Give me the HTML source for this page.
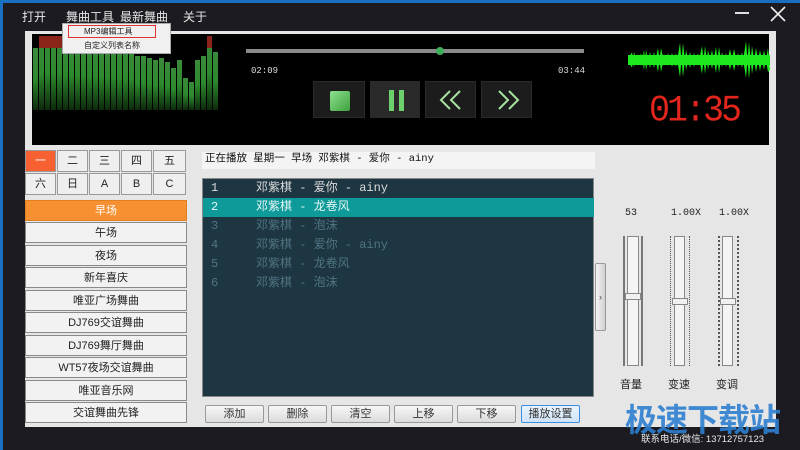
<!DOCTYPE html>
<html><head><meta charset="utf-8"><style>
*{margin:0;padding:0;box-sizing:border-box}
body{width:800px;height:450px;background:#1b1b21;position:relative;overflow:hidden;font-family:"Liberation Sans","Noto Sans CJK SC",sans-serif;font-size:11px}
.a{position:absolute}
.menu{color:#e8e8e8;font-size:12px;top:8px}
.grid div{position:absolute;width:31px;height:22px;background:#efefef;border:1px solid #999;text-align:center;line-height:21px;color:#222;font-size:11px}
.cat{position:absolute;left:25px;width:162px;height:21px;background:#f2f2f2;border:1px solid #8a8a8a;text-align:center;line-height:20px;color:#222;font-size:11px}
.row{position:absolute;left:0;width:391px;height:19px;line-height:19px;font-size:12px;font-family:"Liberation Mono","Noto Sans CJK SC",monospace}
.row span{position:absolute}
.btn{position:absolute;top:405px;width:59px;height:18px;background:linear-gradient(#f6f6f6,#dcdcdc);border:1px solid #999;border-radius:2px;text-align:center;line-height:16px;color:#333;font-size:11px}
.pb{position:absolute;top:81px;height:37px;background:#1c1c1c;border:1px solid #2a2a2a}
</style></head><body>
<div class="a" style="left:0;top:0;width:800px;height:3px;background:#1b6fc0"></div>
<div class="a" style="left:0;top:0;width:3px;height:450px;background:#1b6fc0"></div>
<div class="a menu" style="left:22px">打开</div>
<div class="a menu" style="left:66px">舞曲工具</div>
<div class="a menu" style="left:120px">最新舞曲</div>
<div class="a menu" style="left:183px">关于</div>
<div class="a" style="left:735px;top:12px;width:14px;height:2px;background:#ddd"></div>
<svg class="a" style="left:770px;top:6px" width="16" height="16"><path d="M1 1L15 15M15 1L1 15" stroke="#eee" stroke-width="1.6"/></svg>
<div class="a" style="left:25px;top:31px;width:751px;height:396px;background:#e6e6e6"></div>
<div class="a" style="left:32px;top:34px;width:737px;height:111px;background:#000"></div>
<svg class="a" style="left:32px;top:34px" width="190" height="80">
<defs><linearGradient id="g" x1="0" y1="0" x2="0" y2="1"><stop offset="0" stop-color="#3a8a3a"/><stop offset=".5" stop-color="#2e8a2e"/><stop offset="1" stop-color="#0c2a0c"/></linearGradient></defs>
<g fill="url(#g)">
<rect x="1" y="14" width="5" height="62"/><rect x="7" y="2" width="5" height="74"/><rect x="13" y="2" width="5" height="74"/><rect x="19" y="2" width="5" height="74"/><rect x="25" y="2" width="5" height="74"/><rect x="31" y="4" width="5" height="72"/><rect x="37" y="6" width="5" height="70"/><rect x="43" y="6" width="5" height="70"/><rect x="49" y="6" width="5" height="70"/><rect x="55" y="8" width="5" height="68"/><rect x="61" y="8" width="5" height="68"/><rect x="67" y="10" width="5" height="66"/><rect x="73" y="10" width="5" height="66"/><rect x="79" y="10" width="5" height="66"/><rect x="85" y="12" width="5" height="64"/><rect x="91" y="14" width="5" height="62"/><rect x="97" y="14" width="5" height="62"/><rect x="103" y="22" width="5" height="54"/><rect x="109" y="22" width="5" height="54"/><rect x="115" y="24" width="5" height="52"/><rect x="121" y="26" width="5" height="50"/><rect x="127" y="24" width="5" height="52"/><rect x="133" y="28" width="5" height="48"/><rect x="139" y="34" width="5" height="42"/><rect x="145" y="26" width="5" height="50"/><rect x="151" y="44" width="5" height="32"/><rect x="157" y="48" width="5" height="28"/><rect x="163" y="26" width="5" height="50"/><rect x="169" y="22" width="5" height="54"/><rect x="175" y="2" width="5" height="74"/><rect x="181" y="18" width="5" height="58"/>
</g>
<g fill="#8a2418"><rect x="7" y="2" width="23" height="12"/><rect x="175" y="2" width="5" height="12"/></g>
</svg>
<div class="a" style="left:62px;top:23px;width:109px;height:31px;background:#f0f0f0;border:1px solid #aaa"></div>
<div class="a" style="left:68px;top:25px;width:88px;height:13px;border:1.5px solid #d33"></div>
<div class="a" style="left:84px;top:26px;font-size:8px;color:#222">MP3编辑工具</div>
<div class="a" style="left:84px;top:40px;font-size:8px;color:#222">自定义列表名称</div>
<div class="a" style="left:246px;top:49px;width:338px;height:4px;background:#8a8a8a"></div>
<div class="a" style="left:436px;top:47px;width:8px;height:8px;border-radius:50%;background:#3fae5a"></div>
<div class="a" style="left:251px;top:66px;color:#ddd;font-size:9px;font-family:'Liberation Mono',monospace">02:09</div>
<div class="a" style="left:558px;top:66px;color:#ddd;font-size:9px;font-family:'Liberation Mono',monospace">03:44</div>
<div class="pb" style="left:313px;width:52px"><div class="a" style="left:16px;top:9px;width:20px;height:20px;border-radius:2px;background:linear-gradient(135deg,#8fe28f,#3da03d)"></div></div>
<div class="pb" style="left:370px;width:50px;background:#2a2a2a"><div class="a" style="left:18px;top:8px;width:5px;height:21px;background:#6cd06c"></div><div class="a" style="left:28px;top:8px;width:5px;height:21px;background:#6cd06c"></div></div>
<div class="pb" style="left:425px;width:51px"><svg class="a" style="left:12px;top:8px" width="26" height="20"><path d="M12 1L3 10L12 19M22 1L13 10L22 19" stroke="#a8e0a0" stroke-width="2" fill="none"/></svg></div>
<div class="pb" style="left:481px;width:51px"><svg class="a" style="left:13px;top:8px" width="26" height="20"><path d="M4 1L13 10L4 19M14 1L23 10L14 19" stroke="#a8e0a0" stroke-width="2" fill="none"/></svg></div>
<svg class="a" style="left:628px;top:40px" width="142" height="40"><g fill="#1ee81e"><rect x="0" y="15" width="142" height="10"/><path d="M0 20 L4 12 L6 27 L10 14 L13 26 L16 10 L18 30 L22 12 L26 28 L30 8 L33 32 L37 14 L40 26 L44 13 L48 27 L52 3 L55 37 L58 10 L62 28 L66 13 L70 26 L74 6 L77 34 L80 10 L84 29 L88 7 L91 33 L94 12 L98 27 L102 9 L106 31 L110 13 L114 28 L118 1 L121 39 L124 6 L128 32 L132 10 L136 30 L140 8 L142 30 L140 32 L136 10 L132 31 L128 8 L124 34 L121 2 L118 38 L114 12 L110 27 L106 9 L102 30 L98 13 L94 27 L91 7 L88 33 L84 10 L80 30 L77 6 L74 34 L70 13 L66 27 L62 12 L58 30 L55 3 L52 37 L48 13 L44 27 L40 13 L37 26 L33 8 L30 32 L26 12 L22 28 L18 10 L16 30 L13 13 L10 26 L6 12 L4 28Z"/></g></svg>
<div class="a" style="left:649px;top:92px;color:#e2261e;font-size:35px;font-family:'Liberation Mono',monospace;letter-spacing:-3px;line-height:38px;transform:scaleY(1.05)">01:35</div>
<div class="grid">
<div style="left:25px;top:150px;background:#f76030;color:#fff">一</div><div style="left:57px;top:150px">二</div><div style="left:89px;top:150px">三</div><div style="left:121px;top:150px">四</div><div style="left:153px;top:150px;width:33px">五</div>
<div style="left:25px;top:173px">六</div><div style="left:57px;top:173px">日</div><div style="left:89px;top:173px">A</div><div style="left:121px;top:173px">B</div><div style="left:153px;top:173px;width:33px">C</div>
</div>
<div class="cat" style="top:200px;background:#f79030;color:#fff;border-color:#e08020">早场</div>
<div class="cat" style="top:222px">午场</div>
<div class="cat" style="top:245px">夜场</div>
<div class="cat" style="top:267px">新年喜庆</div>
<div class="cat" style="top:290px">唯亚广场舞曲</div>
<div class="cat" style="top:312px">DJ769交谊舞曲</div>
<div class="cat" style="top:335px">DJ769舞厅舞曲</div>
<div class="cat" style="top:357px">WT57夜场交谊舞曲</div>
<div class="cat" style="top:380px">唯亚音乐网</div>
<div class="cat" style="top:402px">交谊舞曲先锋</div>
<div class="a" style="left:202px;top:152px;width:393px;height:17px;background:#f4f4f4;line-height:15px;padding-left:3px;color:#111;font-size:10.5px;font-family:'Liberation Mono','Noto Sans CJK SC',monospace">正在播放 星期一 早场 邓紫棋 - 爱你 - ainy</div>
<div class="a" style="left:202px;top:178px;width:392px;height:219px;background:#1e3642;border:1px solid #888">
<div class="row" style="top:0;color:#ddd"><span style="left:8px">1</span><span style="left:53px">邓紫棋 - 爱你 - ainy</span></div>
<div class="row" style="top:19px;background:#0e9a98;color:#e6f6f6"><span style="left:8px">2</span><span style="left:53px">邓紫棋 - 龙卷风</span></div>
<div class="row" style="top:38px;color:#4f7482"><span style="left:8px">3</span><span style="left:53px">邓紫棋 - 泡沫</span></div>
<div class="row" style="top:57px;color:#4f7482"><span style="left:8px">4</span><span style="left:53px">邓紫棋 - 爱你 - ainy</span></div>
<div class="row" style="top:76px;color:#4f7482"><span style="left:8px">5</span><span style="left:53px">邓紫棋 - 龙卷风</span></div>
<div class="row" style="top:95px;color:#4f7482"><span style="left:8px">6</span><span style="left:53px">邓紫棋 - 泡沫</span></div>
</div>
<div class="a" style="left:595px;top:263px;width:11px;height:68px;background:linear-gradient(90deg,#f4f4f4,#d0d0d0);border:1px solid #999;border-radius:2px;color:#444;font-size:9px;line-height:66px;text-align:center">›</div>
<div class="btn" style="left:205px">添加</div><div class="btn" style="left:268px">删除</div><div class="btn" style="left:331px">清空</div><div class="btn" style="left:394px">上移</div><div class="btn" style="left:457px">下移</div><div class="btn" style="left:521px;border-color:#3a8ee6;background:linear-gradient(#eaf4fd,#cfe4f8)">播放设置</div>
<div class="a" style="left:625px;top:208px;color:#222;font-size:10px;font-family:'Liberation Mono',monospace">53</div>
<div class="a" style="left:671px;top:208px;color:#222;font-size:10px;font-family:'Liberation Mono',monospace">1.00X</div>
<div class="a" style="left:719px;top:208px;color:#222;font-size:10px;font-family:'Liberation Mono',monospace">1.00X</div>
<div class="a" style="left:623px;top:236px;width:2px;height:130px;background:#777"></div><div class="a" style="left:641px;top:236px;width:2px;height:130px;background:#777"></div>
<div class="a" style="left:627px;top:236px;width:12px;height:130px;border:1px solid #888;background:#f4f4f4"></div>
<div class="a" style="left:625px;top:293px;width:16px;height:7px;background:#f0f0f0;border:1px solid #888"></div>
<div class="a" style="left:670px;top:236px;width:1px;height:130px;border-left:1px dotted #555"></div><div class="a" style="left:689px;top:236px;width:1px;height:130px;border-left:1px dotted #555"></div>
<div class="a" style="left:674px;top:236px;width:11px;height:130px;border:1px solid #888;background:#f4f4f4"></div>
<div class="a" style="left:672px;top:298px;width:16px;height:7px;background:#f0f0f0;border:1px solid #888"></div>
<div class="a" style="left:718px;top:236px;width:1px;height:130px;border-left:2px dotted #555"></div><div class="a" style="left:737px;top:236px;width:1px;height:130px;border-left:2px dotted #555"></div>
<div class="a" style="left:722px;top:236px;width:11px;height:130px;border:1px solid #888;background:#f4f4f4"></div>
<div class="a" style="left:720px;top:298px;width:16px;height:7px;background:#f0f0f0;border:1px solid #888"></div>
<div class="a" style="left:620px;top:376px;color:#222;font-size:11px">音量</div>
<div class="a" style="left:668px;top:376px;color:#222;font-size:11px">变速</div>
<div class="a" style="left:716px;top:376px;color:#222;font-size:11px">变调</div>
<div class="a" style="left:625px;top:398px;color:#2d7fd0;font-size:32px;font-weight:bold;letter-spacing:-1px;font-family:'Noto Sans CJK SC',sans-serif;line-height:40px;opacity:.9">极速下载站</div>
<div class="a" style="left:641px;top:431px;color:#e8e8e8;font-size:9.5px">联系电话/微信: 13712757123</div>
</body></html>
